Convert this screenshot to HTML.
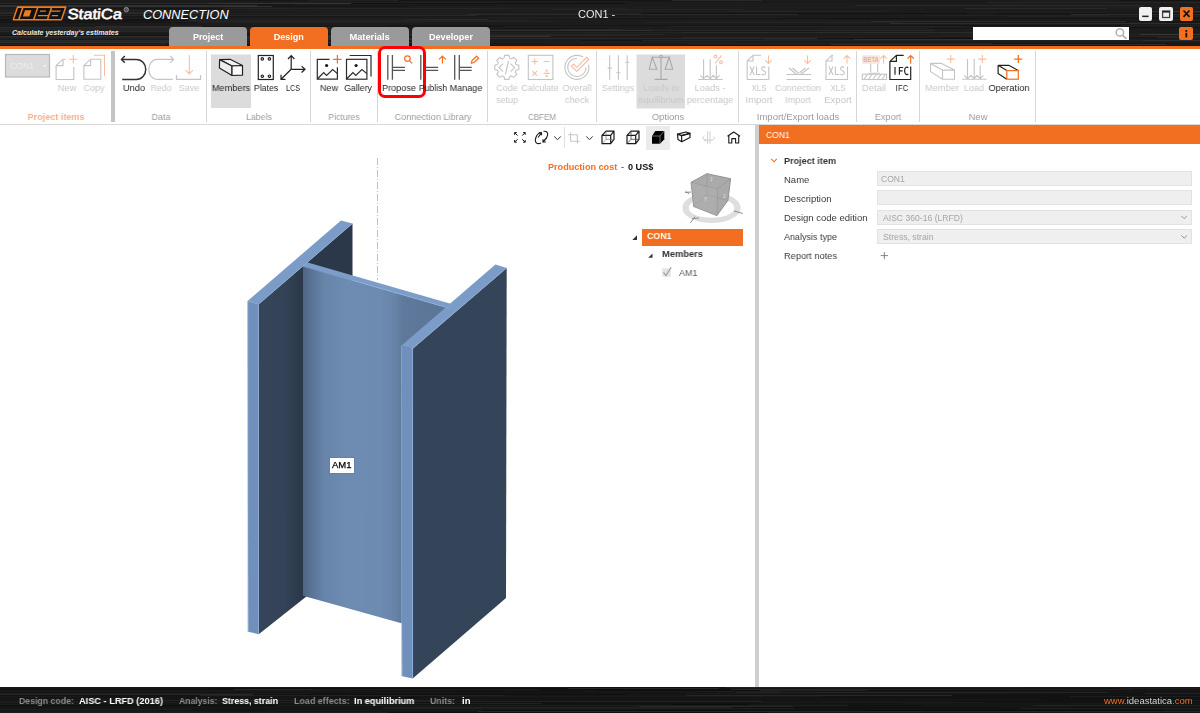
<!DOCTYPE html>
<html><head><meta charset="utf-8">
<style>
*{margin:0;padding:0;box-sizing:border-box}
html,body{width:1200px;height:713px;overflow:hidden;background:#fff;font-family:"Liberation Sans",sans-serif}
.a{position:absolute}
.t{position:absolute;white-space:nowrap;line-height:1}
.t,.rl,.gl,.tab,.st,.lab,.fld{will-change:transform}
.hdr{left:0;top:0;width:1200px;height:45px;background:#1d1d1d;
background-image:
repeating-linear-gradient(180deg,rgba(255,255,255,0) 0px,rgba(255,255,255,.06) 1px,rgba(255,255,255,0) 2px,rgba(0,0,0,.15) 3px,rgba(255,255,255,0) 5px),
repeating-linear-gradient(180deg,rgba(255,255,255,.0) 0px,rgba(255,255,255,.05) 2px,rgba(0,0,0,.1) 4px,rgba(255,255,255,0) 7px);}
.tab{position:absolute;top:27px;height:18.7px;box-shadow:inset 0 -1.8px 0 #8e9ea8;width:78px;border-radius:4px 4px 0 0;background:#9a9a9a;color:#fff;font-weight:bold;font-size:9.5px;text-align:center;line-height:19px}
.rl{position:absolute;font-size:9.5px;line-height:12px;text-align:center;white-space:nowrap;color:#1e1e1e}
.dis{color:#c8c8c8}
.gl{position:absolute;top:110.5px;font-size:9.5px;line-height:12px;color:#9b9b9b;text-align:center;white-space:nowrap}
.sep{position:absolute;top:51px;width:1px;height:71px;background:#d6d6d6}
.st{position:absolute;transform-origin:0 0;top:695px;font-size:9.5px;font-weight:bold;line-height:12px;white-space:nowrap}
.lab{position:absolute;left:784px;font-size:9.5px;line-height:12px;color:#3a3a3a;white-space:nowrap}
.fld{position:absolute;left:877px;width:315px;height:15.4px;background:#efefef;border:1px solid #e2e2e2;font-size:9.5px;color:#a5a5a5;line-height:14px;padding-left:4px}
</style></head>
<body>
<!-- HEADER -->
<div class="a" style="left:0;top:0;width:1200px;height:47px;background:#161616"></div>
<svg class="a" style="left:0;top:0" width="1200" height="45" viewBox="0 0 1200 45"><rect x="0" y="0" width="1200" height="45" fill="#1c1c1c"/>
<rect x="225" y="0" width="84" height="1" fill="rgb(16,16,16)" opacity="0.45"/>
<rect x="309" y="0" width="89" height="1" fill="rgb(44,44,44)" opacity="0.30"/>
<rect x="398" y="0" width="274" height="1" fill="rgb(16,16,16)" opacity="0.55"/>
<rect x="672" y="0" width="90" height="1" fill="rgb(48,48,48)" opacity="0.60"/>
<rect x="1120" y="0" width="263" height="1" fill="rgb(15,15,15)" opacity="0.56"/>
<rect x="0" y="1" width="128" height="1" fill="rgb(30,30,30)" opacity="0.55"/>
<rect x="632" y="1" width="387" height="1" fill="rgb(24,24,24)" opacity="0.55"/>
<rect x="278" y="2" width="292" height="1" fill="rgb(35,35,35)" opacity="0.69"/>
<rect x="987" y="2" width="213" height="1" fill="rgb(43,43,43)" opacity="0.65"/>
<rect x="0" y="3" width="207" height="1" fill="rgb(50,50,50)" opacity="0.53"/>
<rect x="207" y="3" width="144" height="1" fill="rgb(60,60,60)" opacity="0.76"/>
<rect x="351" y="3" width="275" height="1" fill="rgb(14,14,14)" opacity="0.67"/>
<rect x="0" y="4" width="293" height="1" fill="rgb(17,17,17)" opacity="0.51"/>
<rect x="0" y="5" width="257" height="1" fill="rgb(54,54,54)" opacity="0.77"/>
<rect x="257" y="5" width="241" height="1" fill="rgb(22,22,22)" opacity="0.52"/>
<rect x="669" y="5" width="186" height="1" fill="rgb(37,37,37)" opacity="0.29"/>
<rect x="855" y="5" width="289" height="1" fill="rgb(47,47,47)" opacity="0.74"/>
<rect x="0" y="6" width="272" height="1" fill="rgb(55,55,55)" opacity="0.78"/>
<rect x="272" y="6" width="137" height="1" fill="rgb(17,17,17)" opacity="0.38"/>
<rect x="588" y="6" width="153" height="1" fill="rgb(28,28,28)" opacity="0.33"/>
<rect x="463" y="7" width="260" height="1" fill="rgb(37,37,37)" opacity="0.31"/>
<rect x="723" y="7" width="384" height="1" fill="rgb(37,37,37)" opacity="0.29"/>
<rect x="1107" y="7" width="166" height="1" fill="rgb(40,40,40)" opacity="0.44"/>
<rect x="86" y="8" width="137" height="1" fill="rgb(18,18,18)" opacity="0.59"/>
<rect x="223" y="8" width="96" height="1" fill="rgb(51,51,51)" opacity="0.33"/>
<rect x="319" y="8" width="189" height="1" fill="rgb(50,50,50)" opacity="0.51"/>
<rect x="508" y="8" width="119" height="1" fill="rgb(41,41,41)" opacity="0.52"/>
<rect x="730" y="8" width="235" height="1" fill="rgb(28,28,28)" opacity="0.71"/>
<rect x="965" y="8" width="142" height="1" fill="rgb(45,45,45)" opacity="0.77"/>
<rect x="550" y="9" width="193" height="1" fill="rgb(45,45,45)" opacity="0.45"/>
<rect x="0" y="10" width="176" height="1" fill="rgb(45,45,45)" opacity="0.45"/>
<rect x="176" y="10" width="74" height="1" fill="rgb(29,29,29)" opacity="0.39"/>
<rect x="250" y="10" width="414" height="1" fill="rgb(34,34,34)" opacity="0.69"/>
<rect x="664" y="10" width="238" height="1" fill="rgb(35,35,35)" opacity="0.31"/>
<rect x="902" y="10" width="300" height="1" fill="rgb(24,24,24)" opacity="0.52"/>
<rect x="608" y="11" width="121" height="1" fill="rgb(36,36,36)" opacity="0.51"/>
<rect x="729" y="11" width="151" height="1" fill="rgb(52,52,52)" opacity="0.30"/>
<rect x="1142" y="11" width="103" height="1" fill="rgb(58,58,58)" opacity="0.80"/>
<rect x="0" y="12" width="74" height="1" fill="rgb(49,49,49)" opacity="0.69"/>
<rect x="74" y="12" width="134" height="1" fill="rgb(50,50,50)" opacity="0.61"/>
<rect x="966" y="12" width="131" height="1" fill="rgb(39,39,39)" opacity="0.27"/>
<rect x="1097" y="12" width="168" height="1" fill="rgb(30,30,30)" opacity="0.67"/>
<rect x="0" y="13" width="226" height="1" fill="rgb(46,46,46)" opacity="0.71"/>
<rect x="226" y="13" width="91" height="1" fill="rgb(34,34,34)" opacity="0.61"/>
<rect x="317" y="13" width="324" height="1" fill="rgb(38,38,38)" opacity="0.54"/>
<rect x="641" y="13" width="328" height="1" fill="rgb(13,13,13)" opacity="0.68"/>
<rect x="969" y="13" width="371" height="1" fill="rgb(12,12,12)" opacity="0.33"/>
<rect x="467" y="14" width="331" height="1" fill="rgb(47,47,47)" opacity="0.74"/>
<rect x="798" y="14" width="89" height="1" fill="rgb(24,24,24)" opacity="0.27"/>
<rect x="997" y="14" width="74" height="1" fill="rgb(16,16,16)" opacity="0.43"/>
<rect x="1071" y="14" width="318" height="1" fill="rgb(50,50,50)" opacity="0.63"/>
<rect x="0" y="15" width="291" height="1" fill="rgb(46,46,46)" opacity="0.53"/>
<rect x="291" y="15" width="186" height="1" fill="rgb(45,45,45)" opacity="0.76"/>
<rect x="477" y="15" width="163" height="1" fill="rgb(20,20,20)" opacity="0.32"/>
<rect x="926" y="15" width="183" height="1" fill="rgb(39,39,39)" opacity="0.62"/>
<rect x="0" y="16" width="398" height="1" fill="rgb(21,21,21)" opacity="0.74"/>
<rect x="398" y="16" width="299" height="1" fill="rgb(26,26,26)" opacity="0.47"/>
<rect x="697" y="16" width="309" height="1" fill="rgb(22,22,22)" opacity="0.34"/>
<rect x="1006" y="16" width="280" height="1" fill="rgb(37,37,37)" opacity="0.48"/>
<rect x="489" y="17" width="294" height="1" fill="rgb(40,40,40)" opacity="0.46"/>
<rect x="1107" y="17" width="92" height="1" fill="rgb(19,19,19)" opacity="0.30"/>
<rect x="1199" y="17" width="199" height="1" fill="rgb(23,23,23)" opacity="0.67"/>
<rect x="0" y="18" width="276" height="1" fill="rgb(28,28,28)" opacity="0.33"/>
<rect x="599" y="18" width="227" height="1" fill="rgb(17,17,17)" opacity="0.69"/>
<rect x="826" y="18" width="153" height="1" fill="rgb(16,16,16)" opacity="0.77"/>
<rect x="979" y="18" width="384" height="1" fill="rgb(17,17,17)" opacity="0.58"/>
<rect x="0" y="19" width="173" height="1" fill="rgb(16,16,16)" opacity="0.50"/>
<rect x="173" y="19" width="233" height="1" fill="rgb(38,38,38)" opacity="0.59"/>
<rect x="406" y="19" width="82" height="1" fill="rgb(45,45,45)" opacity="0.77"/>
<rect x="488" y="19" width="142" height="1" fill="rgb(28,28,28)" opacity="0.36"/>
<rect x="1014" y="19" width="404" height="1" fill="rgb(29,29,29)" opacity="0.69"/>
<rect x="0" y="20" width="188" height="1" fill="rgb(14,14,14)" opacity="0.65"/>
<rect x="188" y="20" width="342" height="1" fill="rgb(44,44,44)" opacity="0.39"/>
<rect x="0" y="21" width="170" height="1" fill="rgb(26,26,26)" opacity="0.71"/>
<rect x="170" y="21" width="385" height="1" fill="rgb(37,37,37)" opacity="0.79"/>
<rect x="681" y="21" width="190" height="1" fill="rgb(39,39,39)" opacity="0.30"/>
<rect x="871" y="21" width="255" height="1" fill="rgb(54,54,54)" opacity="0.58"/>
<rect x="1126" y="21" width="414" height="1" fill="rgb(14,14,14)" opacity="0.35"/>
<rect x="0" y="22" width="197" height="1" fill="rgb(12,12,12)" opacity="0.45"/>
<rect x="197" y="22" width="228" height="1" fill="rgb(47,47,47)" opacity="0.27"/>
<rect x="425" y="22" width="218" height="1" fill="rgb(25,25,25)" opacity="0.25"/>
<rect x="643" y="22" width="255" height="1" fill="rgb(42,42,42)" opacity="0.53"/>
<rect x="898" y="22" width="162" height="1" fill="rgb(27,27,27)" opacity="0.30"/>
<rect x="1165" y="22" width="81" height="1" fill="rgb(13,13,13)" opacity="0.42"/>
<rect x="890" y="23" width="376" height="1" fill="rgb(53,53,53)" opacity="0.70"/>
<rect x="0" y="25" width="389" height="1" fill="rgb(26,26,26)" opacity="0.27"/>
<rect x="389" y="25" width="386" height="1" fill="rgb(18,18,18)" opacity="0.71"/>
<rect x="775" y="25" width="345" height="1" fill="rgb(15,15,15)" opacity="0.59"/>
<rect x="1120" y="25" width="408" height="1" fill="rgb(43,43,43)" opacity="0.25"/>
<rect x="95" y="26" width="107" height="1" fill="rgb(54,54,54)" opacity="0.66"/>
<rect x="202" y="26" width="302" height="1" fill="rgb(16,16,16)" opacity="0.38"/>
<rect x="669" y="26" width="295" height="1" fill="rgb(43,43,43)" opacity="0.51"/>
<rect x="0" y="27" width="383" height="1" fill="rgb(53,53,53)" opacity="0.58"/>
<rect x="1026" y="27" width="128" height="1" fill="rgb(12,12,12)" opacity="0.52"/>
<rect x="1154" y="27" width="404" height="1" fill="rgb(18,18,18)" opacity="0.62"/>
<rect x="0" y="28" width="208" height="1" fill="rgb(45,45,45)" opacity="0.51"/>
<rect x="208" y="28" width="298" height="1" fill="rgb(19,19,19)" opacity="0.42"/>
<rect x="506" y="28" width="103" height="1" fill="rgb(13,13,13)" opacity="0.50"/>
<rect x="609" y="28" width="319" height="1" fill="rgb(29,29,29)" opacity="0.37"/>
<rect x="928" y="28" width="167" height="1" fill="rgb(16,16,16)" opacity="0.33"/>
<rect x="1095" y="28" width="328" height="1" fill="rgb(28,28,28)" opacity="0.58"/>
<rect x="0" y="29" width="383" height="1" fill="rgb(44,44,44)" opacity="0.64"/>
<rect x="383" y="29" width="178" height="1" fill="rgb(43,43,43)" opacity="0.26"/>
<rect x="561" y="29" width="61" height="1" fill="rgb(55,55,55)" opacity="0.47"/>
<rect x="622" y="29" width="132" height="1" fill="rgb(34,34,34)" opacity="0.42"/>
<rect x="754" y="29" width="229" height="1" fill="rgb(32,32,32)" opacity="0.71"/>
<rect x="983" y="29" width="121" height="1" fill="rgb(24,24,24)" opacity="0.75"/>
<rect x="1104" y="29" width="208" height="1" fill="rgb(28,28,28)" opacity="0.47"/>
<rect x="0" y="30" width="361" height="1" fill="rgb(35,35,35)" opacity="0.67"/>
<rect x="361" y="30" width="84" height="1" fill="rgb(29,29,29)" opacity="0.71"/>
<rect x="445" y="30" width="206" height="1" fill="rgb(52,52,52)" opacity="0.78"/>
<rect x="651" y="30" width="283" height="1" fill="rgb(44,44,44)" opacity="0.68"/>
<rect x="0" y="31" width="264" height="1" fill="rgb(47,47,47)" opacity="0.65"/>
<rect x="264" y="31" width="85" height="1" fill="rgb(38,38,38)" opacity="0.59"/>
<rect x="349" y="31" width="130" height="1" fill="rgb(30,30,30)" opacity="0.28"/>
<rect x="479" y="31" width="341" height="1" fill="rgb(22,22,22)" opacity="0.48"/>
<rect x="182" y="32" width="402" height="1" fill="rgb(37,37,37)" opacity="0.60"/>
<rect x="584" y="32" width="98" height="1" fill="rgb(44,44,44)" opacity="0.55"/>
<rect x="682" y="32" width="291" height="1" fill="rgb(60,60,60)" opacity="0.49"/>
<rect x="973" y="32" width="340" height="1" fill="rgb(24,24,24)" opacity="0.35"/>
<rect x="0" y="33" width="344" height="1" fill="rgb(17,17,17)" opacity="0.45"/>
<rect x="966" y="33" width="328" height="1" fill="rgb(36,36,36)" opacity="0.44"/>
<rect x="335" y="34" width="330" height="1" fill="rgb(52,52,52)" opacity="0.40"/>
<rect x="852" y="34" width="288" height="1" fill="rgb(39,39,39)" opacity="0.32"/>
<rect x="1140" y="34" width="277" height="1" fill="rgb(60,60,60)" opacity="0.78"/>
<rect x="0" y="35" width="310" height="1" fill="rgb(16,16,16)" opacity="0.76"/>
<rect x="310" y="35" width="330" height="1" fill="rgb(41,41,41)" opacity="0.68"/>
<rect x="0" y="36" width="391" height="1" fill="rgb(60,60,60)" opacity="0.55"/>
<rect x="391" y="36" width="80" height="1" fill="rgb(12,12,12)" opacity="0.56"/>
<rect x="471" y="36" width="79" height="1" fill="rgb(57,57,57)" opacity="0.78"/>
<rect x="930" y="36" width="283" height="1" fill="rgb(56,56,56)" opacity="0.30"/>
<rect x="0" y="37" width="213" height="1" fill="rgb(45,45,45)" opacity="0.46"/>
<rect x="213" y="37" width="174" height="1" fill="rgb(50,50,50)" opacity="0.55"/>
<rect x="682" y="37" width="184" height="1" fill="rgb(42,42,42)" opacity="0.55"/>
<rect x="940" y="37" width="217" height="1" fill="rgb(15,15,15)" opacity="0.52"/>
<rect x="1157" y="37" width="405" height="1" fill="rgb(53,53,53)" opacity="0.39"/>
<rect x="0" y="38" width="401" height="1" fill="rgb(39,39,39)" opacity="0.52"/>
<rect x="401" y="38" width="416" height="1" fill="rgb(57,57,57)" opacity="0.45"/>
<rect x="817" y="38" width="262" height="1" fill="rgb(12,12,12)" opacity="0.66"/>
<rect x="1079" y="38" width="318" height="1" fill="rgb(25,25,25)" opacity="0.78"/>
<rect x="0" y="39" width="219" height="1" fill="rgb(26,26,26)" opacity="0.37"/>
<rect x="219" y="39" width="211" height="1" fill="rgb(51,51,51)" opacity="0.59"/>
<rect x="604" y="39" width="88" height="1" fill="rgb(21,21,21)" opacity="0.28"/>
<rect x="692" y="39" width="72" height="1" fill="rgb(21,21,21)" opacity="0.28"/>
<rect x="764" y="39" width="90" height="1" fill="rgb(37,37,37)" opacity="0.74"/>
<rect x="854" y="39" width="220" height="1" fill="rgb(58,58,58)" opacity="0.76"/>
<rect x="0" y="40" width="328" height="1" fill="rgb(59,59,59)" opacity="0.42"/>
<rect x="328" y="40" width="253" height="1" fill="rgb(33,33,33)" opacity="0.34"/>
<rect x="581" y="40" width="61" height="1" fill="rgb(17,17,17)" opacity="0.44"/>
<rect x="642" y="40" width="123" height="1" fill="rgb(47,47,47)" opacity="0.46"/>
<rect x="765" y="40" width="218" height="1" fill="rgb(39,39,39)" opacity="0.64"/>
<rect x="983" y="40" width="160" height="1" fill="rgb(46,46,46)" opacity="0.36"/>
<rect x="1143" y="40" width="246" height="1" fill="rgb(59,59,59)" opacity="0.60"/>
<rect x="0" y="41" width="186" height="1" fill="rgb(52,52,52)" opacity="0.46"/>
<rect x="186" y="41" width="297" height="1" fill="rgb(15,15,15)" opacity="0.36"/>
<rect x="483" y="41" width="92" height="1" fill="rgb(33,33,33)" opacity="0.40"/>
<rect x="950" y="41" width="413" height="1" fill="rgb(29,29,29)" opacity="0.25"/>
<rect x="0" y="42" width="364" height="1" fill="rgb(52,52,52)" opacity="0.70"/>
<rect x="364" y="42" width="114" height="1" fill="rgb(57,57,57)" opacity="0.77"/>
<rect x="478" y="42" width="257" height="1" fill="rgb(39,39,39)" opacity="0.32"/>
<rect x="0" y="43" width="180" height="1" fill="rgb(32,32,32)" opacity="0.45"/>
<rect x="180" y="43" width="365" height="1" fill="rgb(17,17,17)" opacity="0.47"/>
<rect x="545" y="43" width="141" height="1" fill="rgb(27,27,27)" opacity="0.61"/>
<rect x="686" y="43" width="306" height="1" fill="rgb(46,46,46)" opacity="0.34"/>
<rect x="992" y="43" width="278" height="1" fill="rgb(16,16,16)" opacity="0.59"/>
<rect x="0" y="44" width="166" height="1" fill="rgb(38,38,38)" opacity="0.79"/>
<rect x="166" y="44" width="288" height="1" fill="rgb(23,23,23)" opacity="0.48"/>
<rect x="831" y="44" width="335" height="1" fill="rgb(54,54,54)" opacity="0.68"/></svg>
<div class="a" style="left:0;top:45.7px;width:1200px;height:3.2px;background:#f26f21"></div>


<!-- LOGO -->
<svg class="a" style="left:0;top:0" width="240" height="45" viewBox="0 0 240 45">
<g transform="translate(0,20.5) skewX(-18.5) translate(0,-20.5)">
<rect x="12.25" y="6.25" width="49.75" height="14.25" rx="1.2" fill="#f07c1c"/>
<rect x="13.8" y="8" width="3.8" height="11" fill="#111"/>
<path d="M19.3,8 H32.6 V19 H19.3 Z M21.6,10.3 V16.6 H28 V10.3 Z" fill="#111" fill-rule="evenodd"/>
<path d="M34.2,8 H46.4 V15.1 H36.3 V16.3 H46.4 V19 H34.2 Z M36.8,10.5 V11.8 H42.8 V10.5 Z" fill="#111" fill-rule="evenodd"/>
<path d="M48,8 H60.4 V19 H48 V11.8 H57.2 V10.5 H48 Z M50.2,15.1 V16.3 H56.4 V15.1 Z" fill="#111" fill-rule="evenodd"/>
</g>
<text x="67.3" y="18.8" font-family="Liberation Sans" font-size="14.6" fill="#fff" stroke="#fff" stroke-width="0.55" textLength="54.5" lengthAdjust="spacingAndGlyphs" transform="translate(67.3,18.8) skewX(-5) translate(-67.3,-18.8)">StatiCa</text>
<circle cx="126.3" cy="9.6" r="2.2" fill="none" stroke="#bbb" stroke-width="0.7"/>
<text x="125.2" y="11" font-family="Liberation Sans" font-size="3.5" fill="#ccc">R</text>
<text x="143" y="18.8" font-family="Liberation Sans" font-style="italic" font-size="13.4" fill="#fff" textLength="85.7" lengthAdjust="spacingAndGlyphs">CONNECTION</text>
<text x="12" y="34.6" font-family="Liberation Sans" font-style="italic" font-weight="bold" font-size="8" fill="#e6e6e6" textLength="106.7" lengthAdjust="spacingAndGlyphs">Calculate yesterday's estimates</text>
</svg>
<!-- tabs -->
<div class="tab" style="left:169px"><span style="display:inline-block;transform:scaleX(.944)">Project</span></div>
<div class="tab" style="left:250px;background:#f26f21;box-shadow:none"><span style="display:inline-block;transform:scaleX(.947)">Design</span></div>
<div class="tab" style="left:331px"><span style="display:inline-block;transform:scaleX(.98)">Materials</span></div>
<div class="tab" style="left:412px"><span style="display:inline-block;transform:scaleX(.957)">Developer</span></div>

<div class="t" style="left:578px;top:8.8px;font-size:11px;color:#e8e8e8">CON1 -</div>

<!-- search -->
<div class="a" style="left:973px;top:27px;width:156px;height:13px;background:#fff"></div>

<!-- window buttons -->
<div class="a" style="left:1139px;top:7px;width:13px;height:14px;background:#f0f0f0;border-radius:2px"></div>
<div class="a" style="left:1159px;top:7px;width:14px;height:14px;background:#f0f0f0;border-radius:2px"></div>
<div class="a" style="left:1180px;top:7px;width:13px;height:14px;background:#f26f21;border-radius:2px"></div>
<div class="a" style="left:1179px;top:27px;width:14px;height:13px;background:#f26f21;border-radius:2px"></div>

<!-- window buttons icons -->
<svg class="a" style="left:1110px;top:0" width="90" height="45" viewBox="1110 0 90 45">
<rect x="1142.2" y="15.6" width="6.4" height="1.5" fill="#222"/>
<rect x="1162.6" y="11" width="7" height="6.5" fill="none" stroke="#444" stroke-width="1.3"/>
<rect x="1162.6" y="11" width="7" height="1.6" fill="#222"/>
<path d="M1183.5,10.5 L1189.5,16.8 M1189.5,10.5 L1183.5,16.8" stroke="#111" stroke-width="1.7"/>
<rect x="1185.4" y="30" width="1.8" height="1.8" fill="#111"/>
<rect x="1185.4" y="32.8" width="1.8" height="4.6" fill="#111"/>
<circle cx="1119.9" cy="32.4" r="3.7" fill="none" stroke="#b0b0b0" stroke-width="1.5"/>
<path d="M1122.6,35.1 L1126.4,38.9" stroke="#b0b0b0" stroke-width="1.7"/>
</svg>

<!-- RIBBON -->
<div class="a" style="left:0;top:49px;width:1200px;height:75px;background:#fff"></div>
<div class="a" style="left:0;top:124px;width:1200px;height:1px;background:#d9d9d9"></div>

<!-- separators -->
<div class="a" style="left:111px;top:51px;width:4px;height:71px;background:#c4c4c4"></div>
<div class="sep" style="left:206px"></div>
<div class="sep" style="left:310px"></div>
<div class="sep" style="left:377px"></div>
<div class="sep" style="left:487px"></div>
<div class="sep" style="left:596px"></div>
<div class="sep" style="left:738px"></div>
<div class="sep" style="left:856px"></div>
<div class="sep" style="left:919px"></div>
<div class="sep" style="left:1035px"></div>


<svg class="a" style="left:0;top:49px" width="1200" height="75" viewBox="0 49 1200 75" fill="none" stroke-linecap="butt">
<!-- highlights -->
<rect x="211" y="54.5" width="40" height="53.5" fill="#dcdcdc" stroke="none"/>
<rect x="636.5" y="54.5" width="48.5" height="54" fill="#dcdcdc" stroke="none"/>
<!-- combo -->
<rect x="5.5" y="54.5" width="44" height="22.5" fill="#dcdcdc" stroke="#b9b9b9" stroke-width="1.2"/>
<path d="M43,65 L46.5,65 L44.75,67.2 Z" fill="#f2f2f2" stroke="none"/>
<!-- New doc -->
<g stroke="#c4c4c4" stroke-width="1.1">
<path d="M65.6,59.2 L63,59.2 L56.1,65.6 L56.1,79.5 L73.8,79.5 L73.8,67"/>
<path d="M56.1,65.6 L63,65.6 L63,59.2"/>
<path d="M83.9,65.6 L90.6,59.2 L100.8,59.2 L100.8,79.3 L83.9,79.3 Z"/>
<path d="M83.9,65.6 L90.6,65.6 L90.6,59.2"/>
</g>
<g stroke="#f9bd9c" stroke-width="1.1">
<path d="M69.2,59.2 H77.4 M73.3,55.1 V63.3"/>
<path d="M94,55.3 H104.5 V75.7"/>
</g>
<!-- Undo -->
<g stroke="#333" stroke-width="1.5">
<path d="M121.9,59.4 H136.5 A9.25,10 0 0 1 136.5,79.4 H122.2"/>
<path d="M124.8,56 L121.5,59.4 L124.8,62.8"/>
</g>
<g stroke="#c4c4c4" stroke-width="1.2">
<path d="M173.5,59.4 H156.75 A8,10 0 0 0 156.75,79.4 H172.8"/>
<path d="M170.25,56 L173.6,59.4 L170.25,62.8"/>
<path d="M176.5,75 V79.4 H200.5 V75"/>
</g>
<g stroke="#f9bd9c" stroke-width="1.1">
<path d="M189.3,55.3 V73.8 M185.6,70.2 L189.3,73.9 L193,70.2"/>
</g>
<!-- Members -->
<g stroke="#222" stroke-width="1.2" stroke-linejoin="round">
<path d="M219.6,59.6 L230,59.3 L242.5,65.5 L232,66 Z" fill="#f2f2f2"/>
<path d="M219.6,59.6 L232,66 L232,75.5 L219.4,67.9 Z" fill="#ececec"/>
<path d="M232,66 L242.5,65.5 L242.5,75.2 L232,75.5 Z" fill="#fafafa"/>
</g>
<!-- Plates -->
<g stroke="#222" stroke-width="1.2">
<rect x="258.3" y="55.5" width="15" height="24" fill="#fff"/>
<circle cx="262.3" cy="58.9" r="1.2"/><circle cx="269.4" cy="58.9" r="1.2"/>
<circle cx="262.3" cy="76.2" r="1.2"/><circle cx="269.4" cy="76.2" r="1.2"/>
</g>
<!-- LCS -->
<g stroke="#222" stroke-width="1.2">
<path d="M291.2,69.3 V55.6 M288,59 L291.2,55.6 L294.4,59"/>
<path d="M291.2,69.3 H305 M301.6,66.1 L305,69.3 L301.6,72.5"/>
<path d="M291.2,69.3 L281,79.3 M281,74.8 L281,79.3 L285.5,79.3"/>
</g>
<!-- Pictures -->
<g stroke="#2b2b2b" stroke-width="1.2">
<path d="M329.5,59.3 H317.3 V79.2 H337.4 V67.2"/>
<path d="M317.3,79 L323.7,72.5 L326.6,75.4 L332.7,69.5 L337.4,73.6"/>
<rect x="346.5" y="59.3" width="20.4" height="19.9"/>
<path d="M346.5,79 L352.9,72.5 L355.8,75.4 L361.9,69.5 L366.9,73.6"/>
<path d="M349.7,55.5 H371 V76.5"/>
</g>
<circle cx="326.6" cy="65.5" r="1.6" fill="#1a1a1a"/>
<circle cx="356.1" cy="65.5" r="1.6" fill="#1a1a1a"/>
<path d="M333.2,59.3 H341.6 M337.4,55.1 V63.5" stroke="#f26f21" stroke-width="1.2"/>
<!-- Connection library -->
<g stroke="#555" stroke-width="1.3">
<path d="M387.8,55 V79.7 M392.4,55 V79.7 M392.4,67.4 H405 M392.4,70.4 H405"/>
<path d="M420.8,55 V79.7 M425.4,55 V79.7 M425.4,67.4 H438.2 M425.4,70.4 H438.2"/>
<path d="M454.7,55 V79.7 M459.3,55 V79.7 M459.3,67.4 H471.7 M459.3,70.4 H471.7"/>
</g>
<g stroke="#f26f21" stroke-width="1.2">
<circle cx="407.4" cy="58.6" r="2.8"/><path d="M409.4,60.6 L412.2,63.4"/>
<path d="M442.4,56 V63.4 M439,59.4 L442.4,56 L445.8,59.4"/>
<path d="M471.4,63.1 L472,60.5 L476.6,56.2 L478.6,58.2 L474,62.5 Z"/>
</g>

<!-- CBFEM -->
<g stroke="#c4c4c4" stroke-width="1.1">
<path d="M515.98,64.59 L518.81,65.28 L518.81,69.52 L515.98,70.21 L515.28,71.91 L516.79,74.40 L513.80,77.39 L511.31,75.88 L509.61,76.58 L508.92,79.41 L504.68,79.41 L503.99,76.58 L502.29,75.88 L499.80,77.39 L496.81,74.40 L498.32,71.91 L497.62,70.21 L494.79,69.52 L494.79,65.28 L497.62,64.59 L498.32,62.89 L496.81,60.40 L499.80,57.41 L502.29,58.92 L503.99,58.22 L504.68,55.39 L508.92,55.39 L509.61,58.22 L511.31,58.92 L513.80,57.41 L516.79,60.40 L515.28,62.89 Z"/>
<path d="M503.1,63.6 L499,67.6 L503.1,71.6 M510.5,63.6 L514.6,67.6 L510.5,71.6 M508.6,61 L505.4,74.3"/>
<rect x="528.3" y="55.3" width="24.6" height="24.2"/>
<circle cx="576.9" cy="67.4" r="12"/>
</g>
<g stroke="#ffffff" stroke-width="3">
<path d="M583,57 L591,65"/>
</g>
<g stroke="#c4c4c4" stroke-width="1.1">
<path d="M576.9,58.2 A9.2,9.2 0 1 0 586.1,67.4"/>
</g>
<g stroke="#f9bd9c" stroke-width="1.1">
<path d="M531.7,61.5 H537.7 M534.7,58.5 V64.5 M543.7,61.5 H549.7 M532.4,71.1 L537,75.7 M537,71.1 L532.4,75.7 M543.7,73.4 H549.7"/>
<circle cx="546.7" cy="70.6" r="0.6" fill="#f9bd9c"/><circle cx="546.7" cy="76.2" r="0.6" fill="#f9bd9c"/>
<path d="M571.5,66.2 L576.8,71.5 L588.8,59.5 L586.7,57.4 L576.8,67.3 L573.6,64.1 Z"/>
</g>
<!-- Options -->
<g stroke="#c4c4c4" stroke-width="1.1">
<path d="M609.7,55.2 V79.7 M618.4,55.2 V79.7 M627.2,55.2 V79.7 M607.7,68.1 H611.7 M616.4,72.7 H620.4 M625.2,62.2 H629.2"/>
</g>
<g stroke="#a8a8a8" stroke-width="1.1">
<circle cx="661" cy="56.6" r="1.3" fill="#dcdcdc"/>
<path d="M661,58 V79.4 M654.6,79.4 H667.4 M652.2,57.3 H659.7 M662.3,57.3 H669.2"/>
<path d="M652.2,57.3 L649.3,69.2 H656.9 Z M669.2,57.3 L665.1,69.2 H672.7 Z"/>
</g>
<g stroke="#c4c4c4" stroke-width="1.1">
<path d="M703.6,59.3 V78.4 M710.2,59.3 V78.4 M716.4,65.2 V78.4 M698.3,79.5 H722.8"/>
<path d="M700.3,75.4 L703.6,78.6 L706.9,75.4 L710.2,78.6 L713.3,75.4 L716.4,78.6 L719.6,75.4"/>
</g>
<g stroke="#f9bd9c" stroke-width="1.1">
<path d="M715,63.5 L721.6,55.3"/><circle cx="715.5" cy="56.5" r="1.4"/><circle cx="721" cy="62.3" r="1.4"/>
</g>
<!-- Import/Export -->
<g stroke="#c4c4c4" stroke-width="1.1">
<path d="M761,55.2 H753 L747.2,61 V79.5 H768.8 V66.5 M747.2,61 H753 V55.2"/>
<path d="M786.5,74.5 H811 M786.5,79.5 H811 M789,68 L796.5,74.5 M792.5,68 L798.8,73.5 M809,68 L800.5,74.5 M805.5,68 L799.5,72.8"/>
<path d="M833.3,55.2 H832 L826,61 V79.5 H847.5 V66.5 M826,61 H832 V55.2"/>
</g>
<g stroke="#c4c4c4" stroke-width="1.1" fill="none"><path d="M750,66.6 L754.3,75 M754.3,66.6 L750,75 M756.6,66.6 V74.5 H760.4 M765.3,67.7 C764.5,66.6 761.8,66.4 761.7,68.6 C761.6,70.7 765.6,70.6 765.6,72.8 C765.6,75.3 762.3,75.3 761.4,74"/><path d="M828.8,66.6 L833.0999999999999,75 M833.0999999999999,66.6 L828.8,75 M835.4,66.6 V74.5 H839.1999999999999 M844.0999999999999,67.7 C843.3,66.6 840.5999999999999,66.4 840.5,68.6 C840.4,70.7 844.4,70.6 844.4,72.8 C844.4,75.3 841.0999999999999,75.3 840.1999999999999,74"/></g>
<g stroke="#f9bd9c" stroke-width="1.1">
<path d="M768.5,55.5 V63.5 M765.3,60.3 L768.5,63.5 L771.7,60.3"/>
<path d="M807.5,55.5 V63.5 M804.3,60.3 L807.5,63.5 L810.7,60.3"/>
<path d="M847,55.5 V63.5 M843.8,58.7 L847,55.5 L850.2,58.7"/>
<path d="M883.6,55.5 V63.5 M880.4,58.7 L883.6,55.5 L886.8,58.7"/>
</g>
<!-- Export: Detail -->
<rect x="862" y="55.3" width="18.1" height="8.4" rx="1" fill="#fbe5da" stroke="none"/>
<text x="863.3" y="62.2" font-family="Liberation Sans" font-weight="bold" font-size="6.3" fill="#d9b9a6" textLength="15.5" lengthAdjust="spacingAndGlyphs">BETA</text>
<g stroke="#c4c4c4" stroke-width="1.1">
<path d="M870.7,63.7 V72 M877.7,63.7 V72 M868.4,73.2 H880.1"/>
<rect x="862.3" y="74.2" width="24.2" height="5.3"/>
<path d="M864,79.5 L867.5,74.2 M868.5,79.5 L872,74.2 M873,79.5 L876.5,74.2 M877.5,79.5 L881,74.2 M882,79.5 L885.5,74.2"/>
</g>
<!-- IFC -->
<g stroke="#222" stroke-width="1.2">
<path d="M903.7,55.4 H896.4 L889.9,61.4 V79.5 H910.7 V66.6 M889.9,61.4 H896.4 V55.4"/>
</g>
<path d="M895,66.9 V74.8 M899.4,74.8 V67.5 H903.2 M899.4,70.9 H902.6 M908.3,68 C907.3,66.6 904.6,66.6 904.6,70.85 C904.6,75 907.3,75.2 908.3,73.8" stroke="#222" stroke-width="1.2" fill="none"/>
<path d="M910.7,55.5 V63.7 M907.5,58.7 L910.7,55.5 L913.9,58.7" stroke="#f26f21" stroke-width="1.2"/>
<!-- New group -->
<g stroke="#c4c4c4" stroke-width="1.1" stroke-linejoin="round">
<path d="M930.5,63.4 L941.6,63.4 L954.5,70.1 L942.5,70.1 Z M930.5,63.4 V71.6 L942.5,79.2 V70.1 M942.5,79.2 H954.5 V70.1"/>
<path d="M967.5,59.1 V78.6 M974.2,59.1 V78.6 M980.2,65.3 V78.6 M962.2,79.2 H986.6 M964.2,75.4 L967.5,78.6 L970.8,75.4 L974.2,78.6 L977,75.4 L980.2,78.6 L983.4,75.4"/>
</g>
<g stroke="#f9bd9c" stroke-width="1.1">
<path d="M946.7,59.1 H954.7 M950.7,55.1 V63.1 M978.3,59.1 H986.3 M982.3,55.1 V63.1"/>
</g>
<g stroke="#222" stroke-width="1.2" stroke-linejoin="round">
<path d="M998.1,65.3 L1008.7,65.3 L1018.3,70.6 M998.1,65.3 L1006.8,70.6 M998.1,65.3 V73.5 L1006.8,79.2"/>
</g>
<rect x="1006.8" y="70.6" width="11.5" height="8.6" stroke="#f26f21" stroke-width="1.2"/>
<path d="M1014.3,59.1 H1022.3 M1018.3,55.1 V63.1" stroke="#f26f21" stroke-width="1.3"/>
</svg>

<!-- combo text -->
<div class="t" style="left:9.6px;top:60.6px;font-size:9.5px;color:#eeeeee;transform:scaleX(.905);transform-origin:0 0">CON1</div>


<div class="a" style="left:377.6px;top:46.3px;width:48.3px;height:51.3px;border:3.3px solid #ff0000;border-radius:7px"></div>
<!-- group labels -->
<div class="rl dis" style="left:26.85px;top:82px;width:80px;transform:scaleX(0.963)">New</div>
<div class="rl dis" style="left:54.45px;top:82px;width:80px;transform:scaleX(0.95)">Copy</div>
<div class="rl" style="left:93.90px;top:82px;width:80px;transform:scaleX(0.98)">Undo</div>
<div class="rl dis" style="left:121.10px;top:82px;width:80px;transform:scaleX(0.934)">Redo</div>
<div class="rl dis" style="left:148.80px;top:82px;width:80px;transform:scaleX(0.95)">Save</div>
<div class="rl" style="left:191.20px;top:82px;width:80px;transform:scaleX(0.965)">Members</div>
<div class="rl" style="left:225.70px;top:82px;width:80px;transform:scaleX(0.917)">Plates</div>
<div class="rl" style="left:253.40px;top:82px;width:80px;transform:scaleX(0.746)">LCS</div>
<div class="rl" style="left:289.25px;top:82px;width:80px;transform:scaleX(0.942)">New</div>
<div class="rl" style="left:318.15px;top:82px;width:80px;transform:scaleX(0.924)">Gallery</div>
<div class="rl" style="left:359.40px;top:82px;width:80px;transform:scaleX(0.955)">Propose</div>
<div class="rl" style="left:392.85px;top:82px;width:80px;transform:scaleX(0.907)">Publish</div>
<div class="rl" style="left:426.40px;top:82px;width:80px;transform:scaleX(0.95)">Manage</div>
<div class="rl dis" style="left:466.70px;top:82px;width:80px;transform:scaleX(0.95)">Code<br>setup</div>
<div class="rl dis" style="left:500.00px;top:82px;width:80px;transform:scaleX(0.947)">Calculate</div>
<div class="rl dis" style="left:536.50px;top:82px;width:80px;transform:scaleX(0.97)">Overall<br>check</div>
<div class="rl dis" style="left:577.60px;top:82px;width:80px;transform:scaleX(0.94)">Settings</div>
<div class="rl dis" style="left:620.60px;top:82px;width:80px;transform:scaleX(0.99)">Loads in<br>equilibrium</div>
<div class="rl dis" style="left:670.30px;top:82px;width:80px;transform:scaleX(0.98)">Loads -<br>percentage</div>
<div class="rl dis" style="left:719.00px;top:82px;width:80px;transform:scaleX(1)"><span style="display:inline-block;transform:scaleX(.83)">XLS</span><br>Import</div>
<div class="rl dis" style="left:758.10px;top:82px;width:80px;transform:scaleX(0.96)">Connection<br>Import</div>
<div class="rl dis" style="left:797.90px;top:82px;width:80px;transform:scaleX(1)"><span style="display:inline-block;transform:scaleX(.83)">XLS</span><br>Export</div>
<div class="rl dis" style="left:834.40px;top:82px;width:80px;transform:scaleX(0.98)">Detail</div>
<div class="rl" style="left:861.75px;top:82px;width:80px;transform:scaleX(0.817)">IFC</div>
<div class="rl dis" style="left:901.90px;top:82px;width:80px;transform:scaleX(0.97)">Member</div>
<div class="rl dis" style="left:933.75px;top:82px;width:80px;transform:scaleX(0.95)">Load</div>
<div class="rl" style="left:969.40px;top:82px;width:80px;transform:scaleX(0.99)">Operation</div>
<div class="gl" style="left:6.45px;width:100px;transform:scaleX(0.956);font-weight:bold;color:#f7b189">Project items</div>
<div class="gl" style="left:111.25px;width:100px;transform:scaleX(0.95)">Data</div>
<div class="gl" style="left:208.75px;width:100px;transform:scaleX(0.925)">Labels</div>
<div class="gl" style="left:294.40px;width:100px;transform:scaleX(0.91)">Pictures</div>
<div class="gl" style="left:383.20px;width:100px;transform:scaleX(0.965)">Connection Library</div>
<div class="gl" style="left:492.00px;width:100px;transform:scaleX(0.84)">CBFEM</div>
<div class="gl" style="left:617.50px;width:100px;transform:scaleX(0.99)">Options</div>
<div class="gl" style="left:748.30px;width:100px;transform:scaleX(1.0)">Import/Export loads</div>
<div class="gl" style="left:837.90px;width:100px;transform:scaleX(0.96)">Export</div>
<div class="gl" style="left:927.70px;width:100px;transform:scaleX(0.98)">New</div>

<!-- 3D view area -->
<div class="a" style="left:755px;top:125px;width:4px;height:562px;background:#cfcfcf"></div>


<!-- BEAM -->
<svg class="a" style="left:0;top:125px" width="755" height="562" viewBox="0 125 755 562">
<defs>
<linearGradient id="wg" x1="303" y1="0" x2="450" y2="0" gradientUnits="userSpaceOnUse">
<stop offset="0" stop-color="#4f6583"/>
<stop offset="0.06" stop-color="#5b7496"/>
<stop offset="0.15" stop-color="#6785aa"/>
<stop offset="0.3" stop-color="#6e8cb2"/>
<stop offset="0.52" stop-color="#6d8ab0"/>
<stop offset="0.62" stop-color="#6884a9"/>
<stop offset="0.68" stop-color="#5e799b"/>
<stop offset="1" stop-color="#5a7495"/>
</linearGradient>
<linearGradient id="lg" x1="258" y1="0" x2="303" y2="0" gradientUnits="userSpaceOnUse">
<stop offset="0" stop-color="#364659"/><stop offset="0.6" stop-color="#334256"/><stop offset="1" stop-color="#2b384a"/>
</linearGradient>
</defs>
<line x1="377.5" y1="158" x2="377.5" y2="280" stroke="#aac6ec" stroke-width="1" stroke-dasharray="7,2,1,2"/>
<!-- left flange inner dark face -->
<polygon points="258.5,304.3 352.5,223.5 352.5,560 258.7,634.2" fill="url(#lg)"/>
<!-- left flange top -->
<polygon points="247.6,301 341,220.4 352.5,223.5 258.5,304.3" fill="#7b9cc7"/>
<!-- left flange front -->
<polygon points="247.6,301 258.5,304.3 258.7,634.2 248.2,631.8" fill="#7090bb"/>
<!-- web front -->
<polygon points="303,266 455,310 404,354 404,624 303,595.7" fill="url(#wg)"/>
<!-- web top strip -->
<polygon points="299,261.5 306,262 455,305 455,310 303,266" fill="#7d9dc8"/>
<!-- right flange dark -->
<polygon points="412.8,348.4 506.7,267.9 506,598 412.7,678.5" fill="#354559"/>
<!-- right flange top -->
<polygon points="401.3,345.7 495.4,264.6 506.7,267.9 412.8,348.4" fill="#7b9cc7"/>
<!-- right flange front -->
<polygon points="401.3,345.7 412.8,348.4 412.7,678.5 402.2,676.2" fill="#7090bb"/>
<g stroke="#8db1e2" stroke-width="0.8" opacity="0.8" fill="none">
<path d="M247.9,301.2 V631.8 M258.4,304.5 V634 M258.5,304.3 L352.3,223.6 M303.2,266.2 L450,308.5"/>
<path d="M401.6,345.9 V676.2 M412.6,348.6 V678.3 M412.8,348.4 L506.5,268"/>
</g>
</svg>
<div class="a" style="left:330px;top:458px;width:24.3px;height:15px;background:#fff;box-shadow:0 0 0 1px #6381aa"></div>
<div class="t" style="left:332px;top:460.1px;font-size:9.5px;color:#000;-webkit-text-stroke:0.25px #000">AM1</div>


<!-- 3D toolbar -->
<div class="a" style="left:646px;top:125.5px;width:24.3px;height:24px;background:#ebebeb"></div>
<div class="a" style="left:564px;top:127px;width:1px;height:20.5px;background:#e0e0e0"></div>
<svg class="a" style="left:500px;top:125px" width="255" height="30" viewBox="500 125 255 30" fill="none">
<g stroke="#1a1a1a" stroke-width="1">
<path d="M514.6,132.6 L517.6,135.6 M514.6,132.6 H516.8 M514.6,132.6 V134.8"/>
<path d="M525.2,132.6 L522.2,135.6 M525.2,132.6 H523 M525.2,132.6 V134.8"/>
<path d="M514.6,142.2 L517.6,139.2 M514.6,142.2 H516.8 M514.6,142.2 V140"/>
<path d="M525.2,142.2 L522.2,139.2 M525.2,142.2 H523 M525.2,142.2 V140"/>
</g>
<g stroke="#1a1a1a" stroke-width="1.1">
<path d="M541.5,132.5 C536,133 534,141 536.5,143 C538,144 540,143.5 541,143"/>
<path d="M538,137.5 L541.5,132.8 M538.8,132.8 H541.5 V135.3"/>
<path d="M543.5,131.3 C546,131 548.5,132 547.5,135.5 C547,138 545,140.5 543,142"/>
<path d="M547,137 L543,142 M543,139.3 V142 H545.8"/>
</g>
<path d="M554.2,136.4 L557.5,139.7 L560.8,136.4" stroke="#333" stroke-width="1"/>
<g stroke="#c8c8c8" stroke-width="1.1">
<path d="M570.6,132.4 V141.3 H579.7 M568.2,134.8 H577.4 V143.5"/>
</g>
<path d="M586.3,136.4 L589.5,139.7 L592.7,136.4" stroke="#333" stroke-width="1"/>
<g stroke="#1a1a1a" stroke-width="1.2" stroke-linejoin="round">
<path d="M602,135.3 H610.7 V143.7 H602 Z M602,135.3 L606,131.2 H614 V139.3 L610.7,143.7 M610.7,135.3 L614,131.2"/>
<path d="M606,131.2 V139.3 H614 M606,139.3 L602,143.7" stroke-width="0.6" stroke="#666"/>
<path d="M627,135.3 H635.7 V143.7 H627 Z M627,135.3 L631,131.2 H639 V139.3 L635.7,143.7 M635.7,135.3 L639,131.2"/>
<path d="M631,131.2 V139.3 H639 M631,139.3 L627,143.7" stroke-width="0.8" stroke="#444"/>
</g>
<path d="M652,136 L655.3,131 H664.3 V139.3 L660,143.8 H652 Z" fill="#000"/>
<path d="M652,136 H660 L664.3,131 M660,136 V143.8" stroke="#9a9a9a" stroke-width="0.7"/>
<g stroke="#1a1a1a" stroke-width="1.2" stroke-linejoin="round">
<path d="M677.5,134.2 L686,132 L690,133.3 L681.5,135.6 Z" fill="#fff"/>
<path d="M677.5,134.2 L678,139.5 L681.8,141.7 L681.5,135.6 Z" fill="#fff"/>
<path d="M681.5,135.6 L690,133.3 V137.5 L681.8,141.7"/>
</g>
<g stroke="#cfcfcf" stroke-width="1">
<path d="M707.6,131.3 V143.7 M710,131.3 V143.7"/>
<path d="M704.5,136 C701,138 703,140 708,140.3 C713,140.5 716,139 714,136.5"/>
<path d="M706,138.8 L704.3,140.3 L706,141.6"/>
</g>
<g stroke="#1a1a1a" stroke-width="1.1" stroke-linejoin="round">
<path d="M727.5,136.3 L733.7,132 L740,136.3 M728.8,135.5 V143 H731.8 V138.6 H735.6 V143 H738.7 V135.5"/>
</g>
</svg>
<div class="t" style="left:547.7px;top:163px;font-size:9.1px;font-weight:bold;color:#f26f21">Production cost</div>
<div class="t" style="left:621px;top:163px;font-size:9.1px;font-weight:normal;color:#222">-</div>
<div class="t" style="left:628.3px;top:163px;font-size:9.1px;font-weight:bold;color:#111">0 US$</div>


<!-- view cube -->
<svg class="a" style="left:670px;top:165px" width="80" height="62" viewBox="670 165 80 62">
<path fill-rule="evenodd" fill="#dedede" d="M682.3,207.8 a29.2,15.3 0 1 0 58.4,0 a29.2,15.3 0 1 0 -58.4,0 Z M688.7,207.8 a22.8,10 0 1 0 45.6,0 a22.8,10 0 1 0 -45.6,0 Z"/>
<g stroke="#8a8a8a" stroke-width="0.9" stroke-linejoin="round">
<path d="M691,182.3 L706.9,173.7 L730.6,178.7 L727.9,200.5 L716.9,215.6 L693.7,206.5 Z" fill="#aaaaaa"/>
<path d="M691,182.3 L717.4,189.1 L730.6,178.7 M717.4,189.1 L716.9,215.6" fill="none" stroke="#999"/>
<path d="M706.9,173.7 L706.9,194.6 L693.7,206.5 M706.9,194.6 L727.9,200.5" fill="none" stroke="#9c9c9c"/>
</g>
<path d="M691,182.3 L717.4,189.1 L716.9,215.6 L693.7,206.5 Z" fill="#b4b4b4" opacity="0.35"/>
<g stroke="#8c8c8c" stroke-width="1">
<path d="M685,192.5 L691,192 M685.5,191 L689,194"/>
<path d="M734,211 L742.7,213.4"/>
<path d="M690.5,222.8 L695,216.5 M692,218.8 L699,218"/>
</g>
<g fill="#e8e8e8" font-family="Liberation Sans" font-size="4.5">
<text x="710" y="181">J</text><text x="723" y="198">J</text><text x="704" y="201">Y</text>
</g>
</svg>
<!-- tree -->
<div class="a" style="left:642.4px;top:229px;width:100.8px;height:16.6px;background:#f26f21"></div>
<div class="t" style="left:646.5px;top:231px;font-size:9.5px;font-weight:bold;color:#fff;transform:scaleX(.93);transform-origin:0 0">CON1</div>
<svg class="a" style="left:628px;top:230px" width="50" height="50" viewBox="628 230 50 50">
<path d="M637,235.3 L637,240 L632.3,240 Z" fill="#333"/>
<path d="M652.5,253.4 L652.5,257.7 L648.2,257.7 Z" fill="#333"/>
<rect x="662.3" y="268.3" width="8.5" height="8.5" fill="#e4e4e4"/>
<path d="M663.5,272.3 L666,275.5 L671.2,267.2" stroke="#9a9a9a" stroke-width="1.1" fill="none"/>
</svg>
<div class="t" style="left:662.3px;top:248.5px;font-size:9.5px;font-weight:bold;color:#333;transform:scaleX(.98);transform-origin:0 0">Members</div>
<div class="t" style="left:679px;top:267.5px;font-size:9.5px;color:#5a5a5a;transform:scaleX(.95);transform-origin:0 0">AM1</div>

<!-- right panel -->
<div class="a" style="left:759px;top:125px;width:441px;height:19px;background:#f26f21"></div>
<div class="t" style="left:766px;top:130px;font-size:9.5px;color:#fff;transform:scaleX(.9);transform-origin:0 0">CON1</div>


<svg class="a" style="left:765px;top:150px" width="130" height="115" viewBox="765 150 130 115">
<path d="M771.2,158.8 L774,161.8 L776.8,158.8" stroke="#f26f21" stroke-width="1.1" fill="none"/>
<path d="M880.7,255.6 H888 M884.35,252 V259.2" stroke="#777" stroke-width="0.9"/>
</svg>
<div class="t" style="left:784px;top:156px;font-size:9.5px;font-weight:bold;color:#333;transform:scaleX(.956);transform-origin:0 0">Project item</div>
<div class="lab" style="top:174px">Name</div>
<div class="lab" style="top:193px">Description</div>
<div class="lab" style="top:211.5px">Design code edition</div>
<div class="lab" style="top:230.6px;transform:scaleX(.946);transform-origin:0 0">Analysis type</div>
<div class="lab" style="top:250px;transform:scaleX(.974);transform-origin:0 0">Report notes</div>
<div class="fld" style="top:171.4px;padding-left:2.9px"><span style="display:inline-block;transform:scaleX(.9);transform-origin:0 0">CON1</span></div>
<div class="fld" style="top:190.2px"></div>
<div class="fld" style="top:209.5px;padding-left:5px"><span style="display:inline-block;transform:scaleX(.906);transform-origin:0 0">AISC 360-16 (LRFD)</span></div>
<div class="fld" style="top:229.2px;padding-left:4.8px"><span style="display:inline-block;transform:scaleX(.912);transform-origin:0 0">Stress, strain</span></div>
<svg class="a" style="left:1178px;top:210px" width="14" height="35" viewBox="1178 210 14 35">
<path d="M1181.5,216 L1184.2,218.7 L1186.9,216 M1181.5,235.5 L1184.2,238.2 L1186.9,235.5" stroke="#888" stroke-width="0.9" fill="none"/>
</svg>

<!-- status bar -->
<svg class="a" style="left:0;top:687px" width="1200" height="26" viewBox="0 0 1200 26"><rect x="0" y="0" width="1200" height="26" fill="#141414"/><rect x="0" y="0" width="1200" height="26" fill="#151515"/>
<rect x="197" y="0" width="193" height="1" fill="rgb(20,20,20)" opacity="0.35"/>
<rect x="570" y="0" width="156" height="1" fill="rgb(12,12,12)" opacity="0.39"/>
<rect x="726" y="0" width="185" height="1" fill="rgb(40,40,40)" opacity="0.61"/>
<rect x="911" y="0" width="111" height="1" fill="rgb(49,49,49)" opacity="0.31"/>
<rect x="1022" y="0" width="303" height="1" fill="rgb(36,36,36)" opacity="0.27"/>
<rect x="0" y="1" width="210" height="1" fill="rgb(22,22,22)" opacity="0.35"/>
<rect x="210" y="1" width="358" height="1" fill="rgb(12,12,12)" opacity="0.53"/>
<rect x="568" y="1" width="151" height="1" fill="rgb(46,46,46)" opacity="0.68"/>
<rect x="1119" y="1" width="365" height="1" fill="rgb(47,47,47)" opacity="0.27"/>
<rect x="0" y="2" width="234" height="1" fill="rgb(17,17,17)" opacity="0.80"/>
<rect x="234" y="2" width="79" height="1" fill="rgb(46,46,46)" opacity="0.70"/>
<rect x="313" y="2" width="227" height="1" fill="rgb(34,34,34)" opacity="0.59"/>
<rect x="540" y="2" width="99" height="1" fill="rgb(10,10,10)" opacity="0.55"/>
<rect x="639" y="2" width="92" height="1" fill="rgb(14,14,14)" opacity="0.62"/>
<rect x="731" y="2" width="139" height="1" fill="rgb(48,48,48)" opacity="0.61"/>
<rect x="870" y="2" width="263" height="1" fill="rgb(34,34,34)" opacity="0.62"/>
<rect x="0" y="3" width="350" height="1" fill="rgb(34,34,34)" opacity="0.26"/>
<rect x="350" y="3" width="246" height="1" fill="rgb(20,20,20)" opacity="0.65"/>
<rect x="596" y="3" width="164" height="1" fill="rgb(8,8,8)" opacity="0.48"/>
<rect x="760" y="3" width="106" height="1" fill="rgb(44,44,44)" opacity="0.50"/>
<rect x="866" y="3" width="143" height="1" fill="rgb(16,16,16)" opacity="0.55"/>
<rect x="0" y="4" width="378" height="1" fill="rgb(31,31,31)" opacity="0.33"/>
<rect x="378" y="4" width="205" height="1" fill="rgb(18,18,18)" opacity="0.76"/>
<rect x="583" y="4" width="115" height="1" fill="rgb(32,32,32)" opacity="0.42"/>
<rect x="698" y="4" width="82" height="1" fill="rgb(38,38,38)" opacity="0.58"/>
<rect x="1165" y="4" width="377" height="1" fill="rgb(18,18,18)" opacity="0.59"/>
<rect x="0" y="5" width="374" height="1" fill="rgb(20,20,20)" opacity="0.56"/>
<rect x="374" y="5" width="81" height="1" fill="rgb(33,33,33)" opacity="0.46"/>
<rect x="736" y="5" width="79" height="1" fill="rgb(50,50,50)" opacity="0.46"/>
<rect x="815" y="5" width="293" height="1" fill="rgb(48,48,48)" opacity="0.61"/>
<rect x="1108" y="5" width="217" height="1" fill="rgb(23,23,23)" opacity="0.46"/>
<rect x="0" y="6" width="248" height="1" fill="rgb(40,40,40)" opacity="0.35"/>
<rect x="248" y="6" width="61" height="1" fill="rgb(39,39,39)" opacity="0.38"/>
<rect x="309" y="6" width="376" height="1" fill="rgb(19,19,19)" opacity="0.47"/>
<rect x="685" y="6" width="94" height="1" fill="rgb(30,30,30)" opacity="0.45"/>
<rect x="1065" y="6" width="80" height="1" fill="rgb(10,10,10)" opacity="0.30"/>
<rect x="1145" y="6" width="220" height="1" fill="rgb(40,40,40)" opacity="0.66"/>
<rect x="0" y="7" width="253" height="1" fill="rgb(49,49,49)" opacity="0.72"/>
<rect x="253" y="7" width="374" height="1" fill="rgb(15,15,15)" opacity="0.79"/>
<rect x="0" y="8" width="200" height="1" fill="rgb(17,17,17)" opacity="0.53"/>
<rect x="200" y="8" width="305" height="1" fill="rgb(45,45,45)" opacity="0.59"/>
<rect x="505" y="8" width="181" height="1" fill="rgb(28,28,28)" opacity="0.36"/>
<rect x="686" y="8" width="266" height="1" fill="rgb(48,48,48)" opacity="0.62"/>
<rect x="952" y="8" width="252" height="1" fill="rgb(18,18,18)" opacity="0.67"/>
<rect x="0" y="9" width="84" height="1" fill="rgb(31,31,31)" opacity="0.56"/>
<rect x="440" y="9" width="382" height="1" fill="rgb(31,31,31)" opacity="0.46"/>
<rect x="822" y="9" width="248" height="1" fill="rgb(17,17,17)" opacity="0.43"/>
<rect x="1070" y="9" width="101" height="1" fill="rgb(36,36,36)" opacity="0.59"/>
<rect x="1171" y="9" width="84" height="1" fill="rgb(41,41,41)" opacity="0.42"/>
<rect x="359" y="10" width="60" height="1" fill="rgb(10,10,10)" opacity="0.41"/>
<rect x="799" y="10" width="246" height="1" fill="rgb(16,16,16)" opacity="0.37"/>
<rect x="1045" y="10" width="394" height="1" fill="rgb(10,10,10)" opacity="0.25"/>
<rect x="241" y="11" width="242" height="1" fill="rgb(22,22,22)" opacity="0.57"/>
<rect x="483" y="11" width="361" height="1" fill="rgb(21,21,21)" opacity="0.59"/>
<rect x="844" y="11" width="303" height="1" fill="rgb(18,18,18)" opacity="0.77"/>
<rect x="1147" y="11" width="184" height="1" fill="rgb(17,17,17)" opacity="0.29"/>
<rect x="0" y="12" width="134" height="1" fill="rgb(25,25,25)" opacity="0.70"/>
<rect x="725" y="12" width="312" height="1" fill="rgb(23,23,23)" opacity="0.27"/>
<rect x="1037" y="12" width="332" height="1" fill="rgb(9,9,9)" opacity="0.38"/>
<rect x="89" y="13" width="342" height="1" fill="rgb(50,50,50)" opacity="0.48"/>
<rect x="1147" y="13" width="149" height="1" fill="rgb(40,40,40)" opacity="0.42"/>
<rect x="0" y="14" width="84" height="1" fill="rgb(38,38,38)" opacity="0.46"/>
<rect x="367" y="14" width="395" height="1" fill="rgb(36,36,36)" opacity="0.80"/>
<rect x="762" y="14" width="193" height="1" fill="rgb(22,22,22)" opacity="0.32"/>
<rect x="955" y="14" width="415" height="1" fill="rgb(11,11,11)" opacity="0.60"/>
<rect x="0" y="15" width="407" height="1" fill="rgb(41,41,41)" opacity="0.41"/>
<rect x="407" y="15" width="171" height="1" fill="rgb(13,13,13)" opacity="0.34"/>
<rect x="758" y="15" width="227" height="1" fill="rgb(32,32,32)" opacity="0.58"/>
<rect x="363" y="16" width="179" height="1" fill="rgb(44,44,44)" opacity="0.47"/>
<rect x="542" y="16" width="359" height="1" fill="rgb(12,12,12)" opacity="0.33"/>
<rect x="1116" y="16" width="74" height="1" fill="rgb(9,9,9)" opacity="0.63"/>
<rect x="0" y="17" width="83" height="1" fill="rgb(45,45,45)" opacity="0.36"/>
<rect x="416" y="17" width="256" height="1" fill="rgb(14,14,14)" opacity="0.36"/>
<rect x="672" y="17" width="77" height="1" fill="rgb(10,10,10)" opacity="0.70"/>
<rect x="749" y="17" width="383" height="1" fill="rgb(26,26,26)" opacity="0.30"/>
<rect x="1132" y="17" width="110" height="1" fill="rgb(21,21,21)" opacity="0.43"/>
<rect x="0" y="18" width="276" height="1" fill="rgb(9,9,9)" opacity="0.39"/>
<rect x="276" y="18" width="204" height="1" fill="rgb(31,31,31)" opacity="0.67"/>
<rect x="480" y="18" width="368" height="1" fill="rgb(38,38,38)" opacity="0.59"/>
<rect x="848" y="18" width="75" height="1" fill="rgb(9,9,9)" opacity="0.54"/>
<rect x="1033" y="18" width="84" height="1" fill="rgb(42,42,42)" opacity="0.64"/>
<rect x="1117" y="18" width="106" height="1" fill="rgb(44,44,44)" opacity="0.49"/>
<rect x="0" y="19" width="328" height="1" fill="rgb(20,20,20)" opacity="0.25"/>
<rect x="639" y="19" width="154" height="1" fill="rgb(45,45,45)" opacity="0.78"/>
<rect x="793" y="19" width="323" height="1" fill="rgb(24,24,24)" opacity="0.41"/>
<rect x="1116" y="19" width="169" height="1" fill="rgb(22,22,22)" opacity="0.31"/>
<rect x="385" y="20" width="347" height="1" fill="rgb(48,48,48)" opacity="0.45"/>
<rect x="732" y="20" width="265" height="1" fill="rgb(13,13,13)" opacity="0.74"/>
<rect x="997" y="20" width="72" height="1" fill="rgb(21,21,21)" opacity="0.39"/>
<rect x="1069" y="20" width="339" height="1" fill="rgb(18,18,18)" opacity="0.79"/>
<rect x="0" y="21" width="382" height="1" fill="rgb(22,22,22)" opacity="0.54"/>
<rect x="382" y="21" width="412" height="1" fill="rgb(46,46,46)" opacity="0.44"/>
<rect x="794" y="21" width="227" height="1" fill="rgb(17,17,17)" opacity="0.61"/>
<rect x="1021" y="21" width="225" height="1" fill="rgb(37,37,37)" opacity="0.63"/>
<rect x="0" y="22" width="191" height="1" fill="rgb(45,45,45)" opacity="0.43"/>
<rect x="191" y="22" width="389" height="1" fill="rgb(23,23,23)" opacity="0.40"/>
<rect x="1139" y="22" width="327" height="1" fill="rgb(30,30,30)" opacity="0.43"/>
<rect x="0" y="23" width="156" height="1" fill="rgb(24,24,24)" opacity="0.78"/>
<rect x="156" y="23" width="112" height="1" fill="rgb(20,20,20)" opacity="0.79"/>
<rect x="268" y="23" width="214" height="1" fill="rgb(35,35,35)" opacity="0.36"/>
<rect x="482" y="23" width="386" height="1" fill="rgb(14,14,14)" opacity="0.74"/>
<rect x="868" y="23" width="297" height="1" fill="rgb(8,8,8)" opacity="0.72"/>
<rect x="0" y="24" width="211" height="1" fill="rgb(37,37,37)" opacity="0.39"/>
<rect x="211" y="24" width="267" height="1" fill="rgb(23,23,23)" opacity="0.64"/>
<rect x="478" y="24" width="360" height="1" fill="rgb(49,49,49)" opacity="0.62"/>
<rect x="838" y="24" width="394" height="1" fill="rgb(49,49,49)" opacity="0.62"/>
<rect x="0" y="25" width="388" height="1" fill="rgb(37,37,37)" opacity="0.42"/>
<rect x="388" y="25" width="381" height="1" fill="rgb(14,14,14)" opacity="0.68"/>
<rect x="769" y="25" width="382" height="1" fill="rgb(24,24,24)" opacity="0.52"/></svg>

<div class="st" style="left:19px;color:#8a8a8a;transform:scaleX(0.92);transform-origin:0 0">Design code:</div>
<div class="st" style="left:78.5px;color:#fff;transform:scaleX(0.97);transform-origin:0 0">AISC - LRFD (2016)</div>
<div class="st" style="left:179px;color:#8a8a8a;transform:scaleX(0.91);transform-origin:0 0">Analysis:</div>
<div class="st" style="left:221.5px;color:#fff;transform:scaleX(0.93);transform-origin:0 0">Stress, strain</div>
<div class="st" style="left:293.5px;color:#8a8a8a;transform:scaleX(0.94);transform-origin:0 0">Load effects:</div>
<div class="st" style="left:353.5px;color:#fff;transform:scaleX(0.97);transform-origin:0 0">In equilibrium</div>
<div class="st" style="left:430px;color:#8a8a8a;transform:scaleX(0.93);transform-origin:0 0">Units:</div>
<div class="st" style="left:461.5px;color:#fff">in</div>
<div class="st" style="left:1103.75px;font-weight:normal;color:#d5d5d5"><span style="color:#f26f21">www.</span>ideastatica<span style="color:#f26f21">.com</span></div>
</body></html>
